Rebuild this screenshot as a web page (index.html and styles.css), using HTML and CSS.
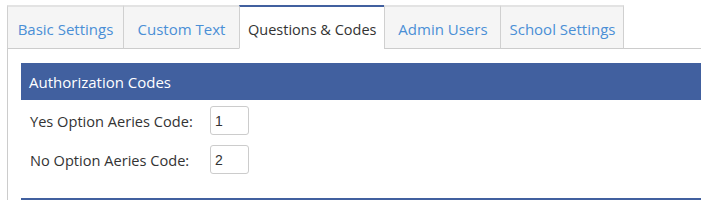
FILE: index.html
```html
<!DOCTYPE html>
<html>
<head>
<meta charset="utf-8">
<link rel="stylesheet" href="styles.css">
</head>
<body>
<div class="page">
  <ul class="tabs">
    <li class="tab">Basic Settings</li>
    <li class="tab">Custom Text</li>
    <li class="tab active">Questions &amp; Codes</li>
    <li class="tab">Admin Users</li>
    <li class="tab last">School Settings</li>
  </ul>
  <div class="panel">
    <div class="section">
      <div class="section-head">Authorization Codes</div>
      <div class="rows">
        <div class="row">
          <label class="lbl">Yes Option Aeries Code:</label>
          <input class="code" type="text" value="1">
        </div>
        <div class="row">
          <label class="lbl">No Option Aeries Code:</label>
          <input class="code" type="text" value="2">
        </div>
      </div>
      <div class="next-section"></div>
    </div>
  </div>
</div>
</body>
</html>
```
FILE: styles.css
```css
html, body {
  margin: 0;
  padding: 0;
  background: #ffffff;
}
body {
  font-family: "Open Sans", Lato, sans-serif;
  color: #333333;
}
.page {
  padding: 5px 0 0 7px;
  overflow: hidden;
  height: 195px;
}
.tabs {
  list-style: none;
  margin: 0;
  padding: 0;
  display: flex;
  border-bottom: 1px solid #cccccc;
  height: 43px;
}
.tab {
  box-sizing: border-box;
  min-width: 116px;
  height: 44px;
  padding: 3px 8px 0 8px;
  display: flex;
  align-items: center;
  justify-content: center;
  border-top: 2px solid #e3e3e3;
  border-left: 1px solid #d0d0d0;
  border-bottom: 1px solid #cccccc;
  background: #f5f5f5;
  color: #4a8fd6;
  font-size: 15px;
}
.tab.last {
  border-right: 1px solid #d0d0d0;
}
.tab.active {
  background: #ffffff;
  color: #333333;
  border-top: 2px solid #41609f;
  border-bottom: 1px solid #ffffff;
  font-size: 14.5px;
}
.panel {
  border-left: 1px solid #cccccc;
  padding: 14px 0 0 13px;
  height: 160px;
}
.section-head {
  background: #41609f;
  color: #ffffff;
  height: 37px;
  display: flex;
  align-items: center;
  padding-left: 8px;
  font-size: 15px;
}
.rows {
  padding: 6px 0 0 9px;
  display: flex;
  flex-direction: column;
  gap: 10px;
}
.row {
  display: flex;
  align-items: center;
}
.lbl {
  width: 180px;
  font-size: 14.6px;
  color: #333333;
}
.code {
  box-sizing: border-box;
  width: 39px;
  height: 29px;
  border: 1px solid #cccccc;
  border-radius: 3px;
  padding: 0 0 0 4px;
  font-family: "Liberation Sans", Arial, sans-serif;
  font-size: 14px;
  color: #333333;
  margin: 0;
}
.next-section {
  margin-top: 24px;
  border-top: 2px solid #41609f;
}
```
